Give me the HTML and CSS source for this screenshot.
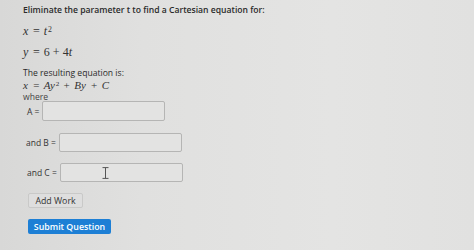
FILE: index.html
```html
<!DOCTYPE html>
<html>
<head>
<meta charset="utf-8">
<link rel="stylesheet" href="styles.css">
</head>
<body>
<div class="page">
  <p class="title">Eliminate the parameter t to find a Cartesian equation for:</p>
  <p class="math big m1"><i>x</i><span class="rel">=</span><i>t</i><sup>2</sup></p>
  <p class="math big m2"><i>y</i><span class="rel">=</span>6<span class="bin">+</span>4<i>t</i></p>
  <p class="txt resulting">The resulting equation is:</p>
  <p class="math m3"><i>x</i><span class="rel">=</span><i>Ay</i><sup>2</sup><span class="bin">+</span><i>By</i><span class="bin">+</span><i>C</i></p>
  <p class="txt where">where</p>
  <div class="row rowA"><span class="lbl">A =</span><span class="box"></span></div>
  <div class="row rowB"><span class="lbl">and B =</span><span class="box"></span></div>
  <div class="row rowC"><span class="lbl">and C =</span><span class="box boxC"><svg class="ibeam" width="7" height="12" viewBox="0 0 7 12"><path d="M0.5 0.6 H6.5 M3.5 0.6 V11.4 M0.5 11.4 H6.5" stroke="#555" stroke-width="1" fill="none"/></svg></span></div>
  <div class="btnrow"><span class="btn add">Add Work</span></div>
  <div class="btnrow"><span class="btn submit">Submit Question</span></div>
</div>
</body>
</html>
```
FILE: styles.css
```css
html, body {
  margin: 0;
  padding: 0;
}
body {
  width: 474px;
  height: 250px;
  overflow: hidden;
  background: linear-gradient(to right, #d8d8d7 0%, #e0e0df 30%, #e4e4e3 70%, #e1e1e0 100%);
  font-family: "Open Sans", "Noto Sans", sans-serif;
  color: #2a2a2a;
}
.page {
  padding: 4px 0 0 23px;
}
p {
  margin: 0;
}
.title {
  font-size: 8.6px;
  font-weight: 600;
  line-height: 12px;
}
.math {
  font-family: "Liberation Serif", "DejaVu Serif", serif;
  font-size: 11px;
  line-height: 12px;
  color: #333;
}
.math.big {
  font-size: 12px;
}
.math i {
  padding-right: 0.08em;
}
.rel {
  padding: 0 0.32em;
}
.bin {
  padding: 0 0.26em;
}
.m3 .rel { padding: 0 0.4em; }
.m3 .bin { padding: 0 0.4em; }
.math sup {
  font-size: 0.65em;
  line-height: 0;
  vertical-align: 0.45em;
}
.m1 { margin-top: 9px; }
.m2 { margin-top: 9px; }
.txt {
  font-size: 8.6px;
  line-height: 12px;
}
.resulting { margin-top: 9px; }
.m3 { margin-top: 0; }
.where { margin-top: 0; color: #444; }
.row {
  display: flex;
  align-items: center;
  font-size: 8.5px;
  color: #333;
}
.rowA { margin-top: -2px; padding-left: 4px; }
.rowB { margin-top: 12px; padding-left: 3px; }
.rowC { margin-top: 11px; padding-left: 4px; }
.lbl {
  margin-right: 3px;
}
.box {
  position: relative;
  display: block;
  width: 121px;
  height: 17px;
  border: 1px solid #b5b5b4;
  border-radius: 2px;
  background: #e3e3e2;
}
.rowA .box { height: 18px; }
.ibeam {
  position: absolute;
  left: 41px;
  top: 3px;
}
.btnrow {
  display: flex;
  padding-left: 5px;
}
.btn {
  display: flex;
  align-items: center;
  justify-content: center;
  font-size: 8.8px;
  border-radius: 2px;
}
.add {
  margin-top: 11px;
  width: 53px;
  height: 13px;
  border: 1px solid #c9c9c8;
  background: #dedede;
  color: #333;
}
.submit {
  margin-top: 11px;
  width: 83px;
  height: 15px;
  background: #1d7fd5;
  color: #fff;
  font-weight: 600;
}
```
